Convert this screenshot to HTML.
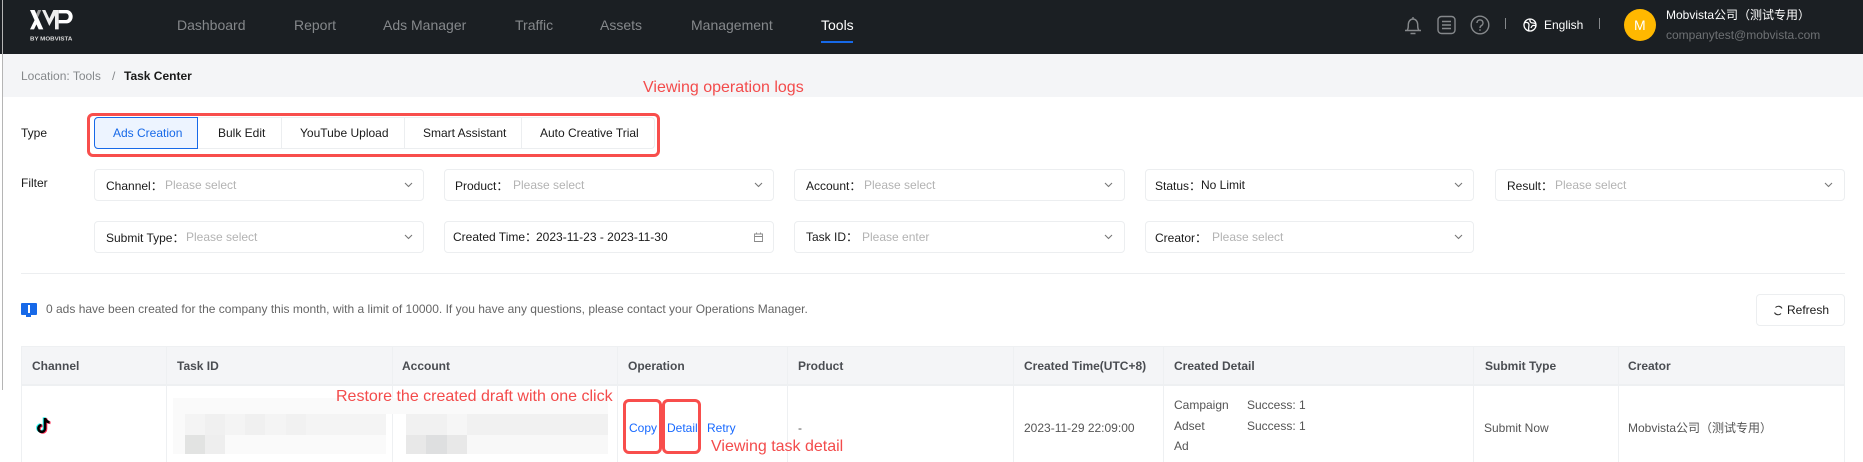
<!DOCTYPE html>
<html lang="en"><head><meta charset="utf-8"><title>Task Center</title>
<style>
html,body{margin:0;padding:0;background:#fff}
#p{position:relative;width:1863px;height:462px;overflow:hidden;background:#fff;font:12px/20px "Liberation Sans","Noto Sans CJK SC",sans-serif;color:#1a1a1a}
#p div,#p span,#p svg{position:absolute}
.t{white-space:nowrap}
.n{font-size:14px;color:#85888b;top:15px}
.b{background:#fff;border:1px solid #eceef0;border-radius:4px;box-sizing:border-box;height:32px}
.ph{color:#b3b3b3}
.tb{top:123px;height:20px}
.h{font-weight:bold;color:#4a4d52;top:356px}
.c{color:#555;}
.l{color:#1769ff;top:418px}
.r{color:#f34b4b;font-size:16px}
.rb{border:3.5px solid #f84e4c;border-radius:6px;box-sizing:border-box}
.v{width:1px;top:346px;height:116px;background:#eef0f2}
.m{background:#000}
</style></head><body><div id="p">
<div style="left:0;top:0;width:1863px;height:54px;background:#1b1f23"></div>
<div style="left:2px;top:0;width:1px;height:390px;background:#b5b5b5"></div>
<div style="left:3px;top:54px;width:1860px;height:43px;background:#f4f5f7"></div>

<svg style="left:20px;top:4px" width="70" height="42" viewBox="0 0 210 126"><path d="M30 18H44L70 76H56Z" fill="#fff"/><path d="M30 76L46 44L52 56L42 76Z" fill="#fff"/><path d="M54 18H64L54 40L49 30Z" fill="#999"/><path d="M66 18H76L88 44L100 18H116V76H105V34L88 66Z" fill="#eee"/><path d="M116 18H140A18 20 0 0 1 140 58H116V48H138A8 10 0 0 0 138 28H116Z" fill="#fff"/><text x="30" y="110" font-family="Liberation Sans" font-size="16" font-weight="bold" fill="#ddd" textLength="127" lengthAdjust="spacingAndGlyphs">BY MOBVISTA</text></svg>

<span class="t n" style="left:177px">Dashboard</span>
<span class="t n" style="left:294px">Report</span>
<span class="t n" style="left:383px">Ads Manager</span>
<span class="t n" style="left:515px">Traffic</span>
<span class="t n" style="left:600px">Assets</span>
<span class="t n" style="left:691px">Management</span>
<span class="t n" style="left:821px;color:#fff">Tools</span>
<div style="left:821px;top:41px;width:32px;height:2px;background:#1769e8"></div>

<svg style="left:1403px;top:15px" width="20" height="20" viewBox="0 0 20 20" fill="none" stroke="#85888b" stroke-width="1.400"><path d="M2 15.500h16M4 15.500c1.300-1.500 1.300-3 1.300-6a4.700 5.500 0 0 1 9.400 0c0 3 0 4.500 1.300 6M7.500 18.500h5M10 4V2"/></svg>
<svg style="left:1437px;top:15px" width="19" height="20" viewBox="0 0 19 20" fill="none" stroke="#85888b" stroke-width="1.400"><rect x="1" y="1.500" width="17" height="17" rx="3.500"/><path d="M5 6.500h9M5 10h9M5 13.500h9"/></svg>
<svg style="left:1470px;top:15px" width="20" height="20" viewBox="0 0 20 20" fill="none" stroke="#85888b" stroke-width="1.400"><circle cx="10" cy="10" r="8.800"/><path d="M7 8a3 3 0 1 1 4.500 2.500c-1 .6-1.500 1.200-1.500 2.500"/><path d="M10 14.300v1.500"/></svg>
<div style="left:1505px;top:18px;width:1px;height:11px;background:#85888b"></div>
<svg style="left:1523px;top:18px" width="14" height="14" viewBox="0 0 14 14" fill="none" stroke="#fff" stroke-width="1.300"><circle cx="7" cy="7" r="6"/><path d="M1.500 5C4 3.500 6 5 6 7s-1 3 0 6M7 1c-.5 3 1 4 3 4s3 1 3 2M13 8c-3-1.500-4.500 0-5 2"/></svg>
<span class="t" style="left:1544px;top:15px;color:#fff;font-size:12px">English</span>
<div style="left:1599px;top:18px;width:1px;height:11px;background:#85888b"></div>
<div style="left:1624px;top:9px;width:32px;height:32px;border-radius:50%;background:#ffb800"></div>
<span class="t" style="left:1634px;top:15px;color:#fff;font-size:14px">M</span>
<span class="t" style="left:1666px;top:5px;color:#fff">Mobvista公司（测试专用）</span>
<span class="t" style="left:1666px;top:25px;color:#6e7174;font-size:12px">companytest@mobvista.com</span>

<span class="t" style="left:21px;top:66px;color:#85888b">Location: Tools</span>
<span class="t" style="left:112px;top:66px;color:#85888b">/</span>
<span class="t" style="left:124px;top:66px;font-weight:bold;color:#1a1a1a">Task Center</span>
<span class="t r" style="left:643px;top:78px">Viewing operation logs</span>

<span class="t" style="left:21px;top:123px">Type</span>
<div style="left:87px;top:113px;width:573px;height:44px;border:3.500px solid #f84e4c;border-radius:6px;box-sizing:border-box"></div>
<div style="left:94px;top:117px;width:561px;height:32px;border:1px solid #eceef0;border-radius:4px;box-sizing:border-box"></div>
<div style="left:94px;top:117px;width:104px;height:32px;background:#edf4ff;border:1px solid #1769e8;border-radius:4px 0 0 4px;box-sizing:border-box"></div>
<div style="left:281px;top:117px;width:1px;height:32px;background:#eceef0"></div>
<div style="left:404px;top:117px;width:1px;height:32px;background:#eceef0"></div>
<div style="left:521px;top:117px;width:1px;height:32px;background:#eceef0"></div>
<span class="t tb" style="left:113px;color:#1769e8">Ads Creation</span>
<span class="t tb" style="left:218px">Bulk Edit</span>
<span class="t tb" style="left:300px">YouTube Upload</span>
<span class="t tb" style="left:423px">Smart Assistant</span>
<span class="t tb" style="left:540px">Auto Creative Trial</span>

<span class="t" style="left:21px;top:173px">Filter</span>
<div class="b" style="left:94px;top:169px;width:330px"></div>
<div class="b" style="left:444px;top:169px;width:330px"></div>
<div class="b" style="left:794px;top:169px;width:331px"></div>
<div class="b" style="left:1145px;top:169px;width:329px"></div>
<div class="b" style="left:1495px;top:169px;width:350px"></div>
<div class="b" style="left:94px;top:221px;width:330px"></div>
<div class="b" style="left:444px;top:221px;width:330px"></div>
<div class="b" style="left:794px;top:221px;width:331px"></div>
<div class="b" style="left:1145px;top:221px;width:329px"></div>

<span class="t" style="left:106px;top:176px">Channel：</span><span class="t ph" style="left:165px;top:175px">Please select</span>
<span class="t" style="left:455px;top:176px">Product：</span><span class="t ph" style="left:513px;top:175px">Please select</span>
<span class="t" style="left:806px;top:176px">Account：</span><span class="t ph" style="left:864px;top:175px">Please select</span>
<span class="t" style="left:1155px;top:176px">Status：</span><span class="t" style="left:1201px;top:175px">No Limit</span>
<span class="t" style="left:1507px;top:176px">Result：</span><span class="t ph" style="left:1555px;top:175px">Please select</span>
<span class="t" style="left:106px;top:228px">Submit Type：</span><span class="t ph" style="left:186px;top:227px">Please select</span>
<span class="t" style="left:453px;top:227px">Created Time：</span><span class="t" style="left:536px;top:227px">2023-11-23 - 2023-11-30</span>
<span class="t" style="left:806px;top:227px">Task ID：</span><span class="t ph" style="left:862px;top:227px">Please enter</span>
<span class="t" style="left:1155px;top:228px">Creator：</span><span class="t ph" style="left:1212px;top:227px">Please select</span>

<div style="left:21px;top:273px;width:1824px;height:1px;background:#eceef0"></div>

<div style="left:21px;top:303px;width:16px;height:12px;background:#1769e8;border-radius:1px"></div>
<div style="left:26px;top:314px;width:5px;height:3px;background:#1769e8"></div>
<div style="left:28px;top:305px;width:2px;height:8px;background:#fff"></div>
<span class="t" style="left:46px;top:299px;color:#666;font-size:12px">0 ads have been created for the company this month, with a limit of 10000. If you have any questions, please contact your Operations Manager.</span>
<div class="b" style="left:1756px;top:294px;width:89px"></div>
<span class="t" style="left:1787px;top:300px">Refresh</span>

<svg style="left:0;top:0" width="1863" height="462" fill="none" stroke="#777" stroke-width="1.100"><path d="M405 183l3.500 3.500 3.500-3.500M755 183l3.500 3.500 3.500-3.500M1105 183l3.500 3.500 3.500-3.500M1455 183l3.500 3.500 3.500-3.500M1825 183l3.500 3.500 3.500-3.500M405 235l3.500 3.500 3.500-3.500M1105 235l3.500 3.500 3.500-3.500M1455 235l3.500 3.500 3.500-3.500"/><path d="M754.500 234h8v7.500h-8zM754.500 236.500h8M756.500 232.500v2M760.500 232.500v2" stroke="#888" stroke-width=".9"/><path d="M1782 308.500a4 4 0 0 0-6.500-1M1774.500 312.500a4 4 0 0 0 6.500 1" stroke="#333" stroke-width="1.100"/></svg>

<div style="left:21px;top:346px;width:1824px;height:40px;background:#f4f5f7;border:1px solid #eef0f2;border-width:1px 0 2px;box-sizing:border-box"></div>
<div class="v" style="left:21px"></div><div class="v" style="left:166px"></div><div class="v" style="left:392px"></div><div class="v" style="left:617px"></div><div class="v" style="left:787px"></div><div class="v" style="left:1013px"></div><div class="v" style="left:1163px"></div><div class="v" style="left:1473px"></div><div class="v" style="left:1618px"></div><div class="v" style="left:1844px"></div>

<span class="t h" style="left:32px">Channel</span>
<span class="t h" style="left:177px">Task ID</span>
<span class="t h" style="left:402px">Account</span>
<span class="t h" style="left:628px">Operation</span>
<span class="t h" style="left:798px">Product</span>
<span class="t h" style="left:1024px">Created Time(UTC+8)</span>
<span class="t h" style="left:1174px">Created Detail</span>
<span class="t h" style="left:1485px">Submit Type</span>
<span class="t h" style="left:1628px">Creator</span>

<svg style="left:35px;top:416px" width="18" height="19" viewBox="0 0 18 19" fill="none" stroke-width="2.600"><path d="M10 2v10.500a3.300 3.300 0 1 1-3.500-3.300M10 2c.5 2.500 2.200 4 4.500 4.300" stroke="#25f4ee" transform="translate(-1 -.6)"/><path d="M10 2v10.500a3.300 3.300 0 1 1-3.500-3.300M10 2c.5 2.500 2.200 4 4.500 4.300" stroke="#fe2c55" transform="translate(1 .6)"/><path d="M10 2v10.500a3.300 3.300 0 1 1-3.500-3.300M10 2c.5 2.500 2.200 4 4.500 4.300" stroke="#000"/></svg>

<div style="left:173px;top:398px;width:213px;height:56px;background:#fafafa"></div>
<div style="left:386px;top:398px;width:222px;height:16px;background:#fafafa"></div>
<div style="left:406px;top:414px;width:202px;height:40px;background:#f8f8f8"></div>
<div class="m" style="left:185px;top:414px;width:201px;height:21px;background:#f4f4f4"></div>
<div class="m" style="left:205px;top:414px;width:20px;height:21px;background:#f0f0f0"></div>
<div class="m" style="left:245px;top:414px;width:20px;height:21px;background:#f0f0f0"></div>
<div class="m" style="left:286px;top:414px;width:20px;height:21px;background:#f1f1f1"></div>
<div class="m" style="left:185px;top:435px;width:20px;height:19px;background:#e2e3e2"></div>
<div class="m" style="left:205px;top:435px;width:20px;height:19px;background:#eeeeee"></div>
<div class="m" style="left:406px;top:414px;width:202px;height:21px;background:#f1f1f1"></div>
<div class="m" style="left:406px;top:435px;width:20px;height:19px;background:#e8e8e8"></div>
<div class="m" style="left:426px;top:435px;width:21px;height:19px;background:#dedfe0"></div>
<div class="m" style="left:447px;top:435px;width:20px;height:19px;background:#e8e8e8"></div>
<div class="m" style="left:447px;top:414px;width:20px;height:21px;background:#f6f6f6"></div>

<span class="t l" style="left:629px">Copy</span>
<span class="t l" style="left:667px">Detail</span>
<span class="t l" style="left:707px">Retry</span>
<span class="t c" style="left:798px;top:418px">-</span>
<span class="t c" style="left:1024px;top:418px">2023-11-29 22:09:00</span>
<span class="t c" style="left:1174px;top:395px">Campaign</span>
<span class="t c" style="left:1174px;top:416px">Adset</span>
<span class="t c" style="left:1174px;top:436px">Ad</span>
<span class="t c" style="left:1247px;top:395px">Success: 1</span>
<span class="t c" style="left:1247px;top:416px">Success: 1</span>
<span class="t c" style="left:1484px;top:418px">Submit Now</span>
<span class="t c" style="left:1628px;top:418px">Mobvista公司（测试专用）</span>

<div class="rb" style="left:623px;top:399px;width:39px;height:55px"></div>
<div class="rb" style="left:662px;top:399px;width:39px;height:55px"></div>
<span class="t r" style="left:336px;top:387px">Restore the created draft with one click</span>
<span class="t r" style="left:711px;top:437px">Viewing task detail</span>
</div></body></html>
